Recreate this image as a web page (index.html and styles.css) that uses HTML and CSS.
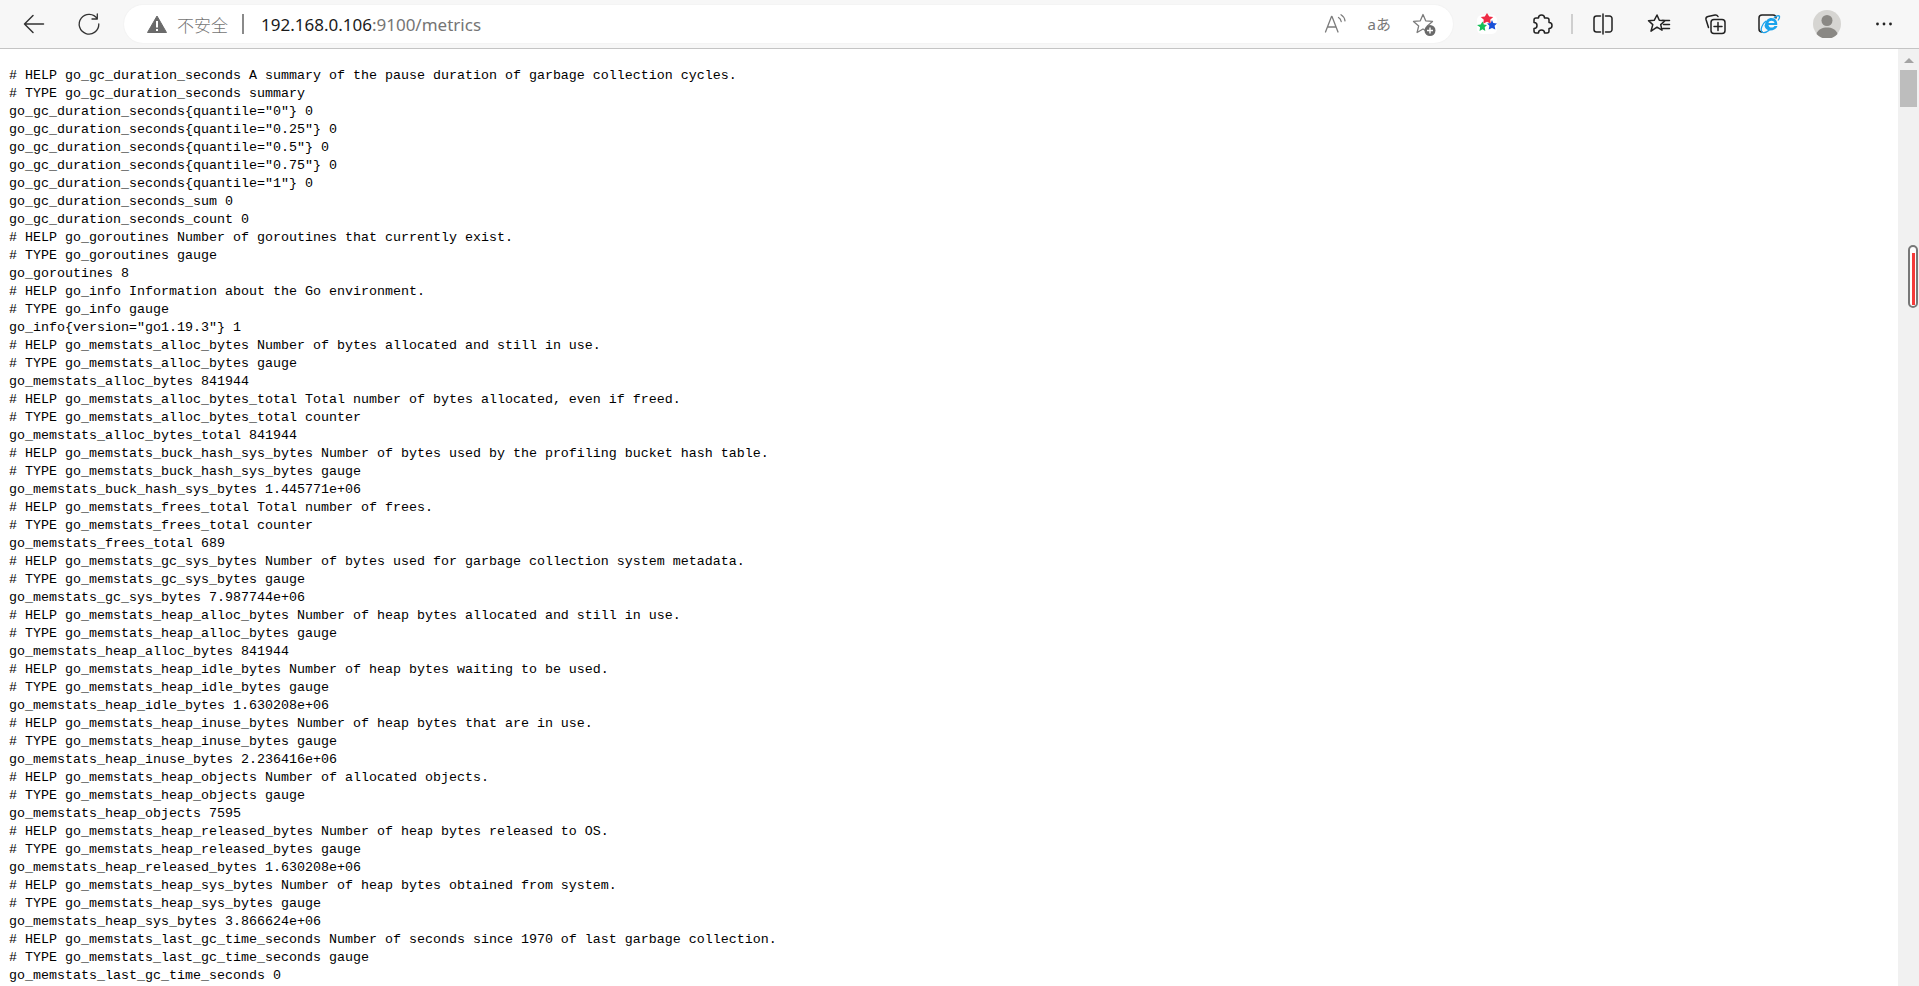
FILE: index.html
```html
<!DOCTYPE html>
<html lang="zh-CN">
<head>
<meta charset="utf-8">
<title>192.168.0.106:9100/metrics</title>
<link rel="stylesheet" href="styles.css">
</head>
<body>
<header class="toolbar">
  <button class="nav nav-back" aria-label="back">
    <svg viewBox="0 0 24 24" width="24" height="24"><path d="M22.500 12H3.500M12 3.500 3.500 12l8.500 8.500" class="ln"/></svg>
  </button>
  <button class="nav nav-reload" aria-label="reload">
    <svg viewBox="0 0 24 24" width="24" height="24"><path d="M20.300 7A9.800 9.800 0 1 0 21.800 12M20.300 2v5H15" class="ln thin"/></svg>
  </button>
  <div class="omnibox">
    <svg class="warn" viewBox="0 0 20 18" width="20" height="18"><path d="M10 1 19.500 17.500H.5Z" fill="#6a6a6a" stroke="#6a6a6a" stroke-linejoin="round"/><rect x="9" y="6" width="2" height="6.500" fill="#fff"/><rect x="9" y="14" width="2" height="2" fill="#fff"/></svg>
    <span class="insecure">不安全</span>
    <span class="divider"></span>
    <span class="url"><span class="host">192.168.0.106</span><span class="rest">:9100/metrics</span></span>
    <span class="spacer"></span>
    <svg class="o-icon" viewBox="0 0 24 24" width="24" height="24"><path d="M2.500 20 8.500 4.500h.5L15 20M4.500 15H13M15.500 5.500c1.500.9 2.400 2.300 2.700 4M18 2.800c2.200 1.300 3.600 3.400 4 6" class="ln gray thin"/></svg>
    <span class="o-trans">aあ</span>
    <svg class="o-icon o-star" viewBox="0 0 24 24" width="24" height="24"><path d="M11 2.500l2.700 6.300 6.800.6-5.200 4.500 1.600 6.600L11 17l-5.900 3.500 1.600-6.600L1.500 9.400l6.800-.6Z" class="ln gray thin"/><circle cx="18" cy="18.500" r="5.500" fill="#6a6a6a"/><path d="M18 15.500v6M15 18.500h6" stroke="#fff" stroke-width="1.400"/></svg>
  </div>
  <div class="tools">
    <span class="tool t-ext"><svg viewBox="0 0 24 24" width="24" height="24"><rect x="2" y="3" width="20" height="19" fill="#fff" rx="5"/><path d="M12 1l2.200 3.500 4 .6-3 2.700.7 4-3.900-2-3.900 2 .7-4-3-2.700 4-.6Z" fill="#ee2b45"/><path d="M17 8l1.300 3 3.700.4-2.400 2.300.7 3.800L17 16l-3.300 1.500.7-3.800L12 11.400l3.700-.4Z" fill="#1a50d8"/><path d="M7.500 9.500l1.300 3 3.200.5-2.300 2.300.6 3.700-2.800-1.700L4.500 19l.6-3.700L2 13l3.700-.5Z" fill="#16bf58"/></svg></span>
    <span class="tool t-puzzle"><svg viewBox="0 0 24 24" width="24" height="24"><path d="M7.500 6a3 3 0 1 1 6 0H16a2 2 0 0 1 2 2v2.500a3 3 0 1 1 0 6V19a2 2 0 0 1-2 2h-2.500a3 3 0 0 0-6 0H5a2 2 0 0 1-2-2v-2.500a3 3 0 0 0 0-6V8a2 2 0 0 1 2-2Z" class="ln dark"/></svg></span>
    <span class="sep"></span>
    <span class="tool t-split"><svg viewBox="0 0 24 24" width="24" height="24"><path d="M9.500 4H5.500A2.500 2.500 0 0 0 3 6.500v11A2.500 2.500 0 0 0 5.500 20h4M14.500 4h4A2.500 2.500 0 0 1 21 6.500v11a2.500 2.500 0 0 1-2.500 2.500h-4M12 2v20" class="ln dark"/></svg></span>
    <span class="tool t-fav"><svg viewBox="0 0 24 24" width="24" height="24"><path d="M10 3l2.300 5.300 5.700.5-4.300 3.800 1.300 5.600-5-3-6 4 1.800-6.600-4.300-3.800 5.700-.5ZM15.500 8.500h7M16.500 12.500h6M16 16.500h6.500" class="ln dark"/></svg></span>
    <span class="tool t-coll"><svg viewBox="0 0 24 24" width="24" height="24"><path d="M5.500 15.500L3 7.500Q2.500 5 5 4.500l7-1.500q2-.4 3 1.500" class="ln dark"/><rect x="8" y="7.500" width="14" height="14" rx="3" class="ln dark"/><path d="M15 10.500v8M11 14.500h8" class="ln dark"/></svg></span>
    <span class="tool t-ie"><svg viewBox="0 0 24 24" width="24" height="24"><path d="M5 20Q2 20 2 17V6q0-3 3-3h11q3 0 3 3" class="ln dark"/><path d="M8 12.500c.6-4 3-6.500 6.500-6.500 4 0 6 3 5.800 7H11.500c.3 3 4.500 3.500 6 1h3c-2 5.500-12 6.500-13-.5ZM11.500 11h6c-.5-3-5.500-3-6 0Z" fill="#1aa3ec" fill-rule="evenodd"/><path d="M9 9C5 12 3 18 5 20c2 1.500 5 0 7.500-2M17 6c2-2 5-3 5.500-1.500.3 1-.5 2.500-1.500 4" fill="none" stroke="#1aa3ec" stroke-width="1.300"/></svg></span>
    <span class="tool t-avatar"><svg viewBox="0 0 28 28" width="28" height="28"><circle cx="14" cy="14" r="14" fill="#d6d5d2"/><circle cx="14" cy="10.500" r="5.500" fill="#8a8884"/><path d="M3.500 24c1.500-5 6-6.500 10.500-6.500S23 19 24.500 24a14 14 0 0 1-21 0Z" fill="#8a8884"/></svg></span>
    <span class="tool t-more"><svg viewBox="0 0 24 24" width="24" height="24"><circle cx="5.500" cy="12" r="1.400" fill="#222"/><circle cx="12" cy="12" r="1.400" fill="#222"/><circle cx="18.500" cy="12" r="1.400" fill="#222"/></svg></span>
  </div>
</header>
<div class="viewport">
<pre class="metrics"># HELP go_gc_duration_seconds A summary of the pause duration of garbage collection cycles.
# TYPE go_gc_duration_seconds summary
go_gc_duration_seconds{quantile="0"} 0
go_gc_duration_seconds{quantile="0.25"} 0
go_gc_duration_seconds{quantile="0.5"} 0
go_gc_duration_seconds{quantile="0.75"} 0
go_gc_duration_seconds{quantile="1"} 0
go_gc_duration_seconds_sum 0
go_gc_duration_seconds_count 0
# HELP go_goroutines Number of goroutines that currently exist.
# TYPE go_goroutines gauge
go_goroutines 8
# HELP go_info Information about the Go environment.
# TYPE go_info gauge
go_info{version="go1.19.3"} 1
# HELP go_memstats_alloc_bytes Number of bytes allocated and still in use.
# TYPE go_memstats_alloc_bytes gauge
go_memstats_alloc_bytes 841944
# HELP go_memstats_alloc_bytes_total Total number of bytes allocated, even if freed.
# TYPE go_memstats_alloc_bytes_total counter
go_memstats_alloc_bytes_total 841944
# HELP go_memstats_buck_hash_sys_bytes Number of bytes used by the profiling bucket hash table.
# TYPE go_memstats_buck_hash_sys_bytes gauge
go_memstats_buck_hash_sys_bytes 1.445771e+06
# HELP go_memstats_frees_total Total number of frees.
# TYPE go_memstats_frees_total counter
go_memstats_frees_total 689
# HELP go_memstats_gc_sys_bytes Number of bytes used for garbage collection system metadata.
# TYPE go_memstats_gc_sys_bytes gauge
go_memstats_gc_sys_bytes 7.987744e+06
# HELP go_memstats_heap_alloc_bytes Number of heap bytes allocated and still in use.
# TYPE go_memstats_heap_alloc_bytes gauge
go_memstats_heap_alloc_bytes 841944
# HELP go_memstats_heap_idle_bytes Number of heap bytes waiting to be used.
# TYPE go_memstats_heap_idle_bytes gauge
go_memstats_heap_idle_bytes 1.630208e+06
# HELP go_memstats_heap_inuse_bytes Number of heap bytes that are in use.
# TYPE go_memstats_heap_inuse_bytes gauge
go_memstats_heap_inuse_bytes 2.236416e+06
# HELP go_memstats_heap_objects Number of allocated objects.
# TYPE go_memstats_heap_objects gauge
go_memstats_heap_objects 7595
# HELP go_memstats_heap_released_bytes Number of heap bytes released to OS.
# TYPE go_memstats_heap_released_bytes gauge
go_memstats_heap_released_bytes 1.630208e+06
# HELP go_memstats_heap_sys_bytes Number of heap bytes obtained from system.
# TYPE go_memstats_heap_sys_bytes gauge
go_memstats_heap_sys_bytes 3.866624e+06
# HELP go_memstats_last_gc_time_seconds Number of seconds since 1970 of last garbage collection.
# TYPE go_memstats_last_gc_time_seconds gauge
go_memstats_last_gc_time_seconds 0</pre>
<aside class="scrollbar">
  <span class="arrow"></span>
  <span class="thumb"></span>
  <span class="marker"><span class="marker-fill"></span></span>
</aside>
</div>
</body>
</html>
```
FILE: styles.css
```css
* { box-sizing: border-box; }
html, body { margin: 0; height: 986px; overflow: hidden; background: #fff; }
body { display: flex; flex-direction: column; font-family: "Noto Sans", "Noto Sans CJK SC", sans-serif; }

.toolbar {
  height: 49px;
  flex: none;
  display: flex;
  align-items: center;
  background: #f7f7f7;
  border-bottom: 1px solid #c4c4c4;
  padding: 0 0 0 21px;
}
.nav { width: 24px; height: 24px; padding: 0; border: 0; background: none; display: block; }
.nav-reload { margin-left: 32px; }
.ln { fill: none; stroke: #333; stroke-width: 1.500; stroke-linecap: round; stroke-linejoin: round; }
.ln.thin { stroke-width: 1.300; }
.ln.gray { stroke: #7c7c7c; }
.ln.dark { stroke: #222; }

.omnibox {
  margin-left: 23px;
  width: 1329px;
  height: 38px;
  background: #fff;
  border-radius: 19px;
  box-shadow: 0 0 2px rgba(0, 0, 0, .06);
  display: flex;
  align-items: center;
  padding: 0 17px 0 23px;
}
.warn { flex: none; }
.insecure { margin-left: 10px; font-size: 17px; font-weight: 300; color: #757575; }
.divider { width: 2px; height: 20px; background: #8a8a8a; margin: 0 17px 0 14px; }
.url { font-size: 17px; white-space: nowrap; }
.host { color: #1a1a1a; }
.rest { color: #757575; }
.spacer { flex: 1; }
.o-icon { flex: none; display: block; }
.o-trans { flex: none; margin-left: 21px; font-size: 15px; line-height: 24px; color: #777; }
.o-star { margin-left: 21px; }

.tools { flex: none; display: flex; align-items: center; margin-left: 22px; }
.tool { display: block; height: 24px; width: 24px; flex: none; }
.t-puzzle { margin-left: 32px; }
.sep { width: 2px; height: 20px; background: #cfcfcf; margin-left: 16px; }
.t-split { margin-left: 18px; }
.t-fav { margin-left: 32px; }
.t-coll { margin-left: 32px; }
.t-ie { margin-left: 30px; }
.t-avatar { margin-left: 32px; width: 28px; height: 28px; }
.t-more { margin-left: 31px; }

.viewport { flex: 1; min-height: 0; display: flex; overflow: hidden; }
.metrics {
  flex: 1;
  margin: 0;
  padding: 18px 9px 0;
  font-family: "Liberation Mono", monospace;
  font-size: 13.333px;
  line-height: 18px;
  color: #000;
  overflow: hidden;
  white-space: pre;
}
.scrollbar {
  position: relative;
  flex: none;
  width: 21px;
  background: #f1f1f1;
  display: flex;
  flex-direction: column;
  align-items: center;
}
.arrow {
  margin-top: 9px;
  width: 0; height: 0;
  border-left: 5px solid transparent;
  border-right: 5px solid transparent;
  border-bottom: 5px solid #a3a3a3;
}
.thumb { margin-top: 7px; width: 17px; height: 37px; background: #bdbdbd; }
.marker {
  position: absolute;
  right: 1px;
  top: 196px;
  width: 10px;
  height: 63px;
  border: 2px solid #777;
  border-radius: 5px;
  background: #fff;
  padding: 6px 1.500px 1px;
}
.marker-fill { display: block; height: 100%; background: #f53a3a; }
```
